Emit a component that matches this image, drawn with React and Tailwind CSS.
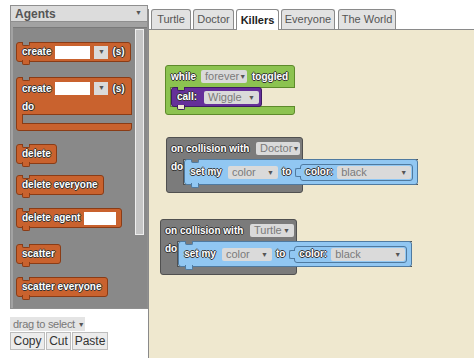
import React from "react";

// block label: white bold text with a dark outline
const label =
  "whitespace-nowrap text-[10px] font-bold leading-none text-white [text-shadow:1px_0_0_#333,-1px_0_0_#333,0_1px_0_#333,0_-1px_0_#333]";

function Field({ text, className }) {
  return (
    <span
      className={
        "flex h-[13px] shrink-0 items-center justify-between rounded-[2px] bg-[#dadada] pl-[4px] pr-[4px] text-[11px] leading-none text-[#7a7a7a] " +
        className
      }
    >
      <span>{text}</span>
      <span className="text-[7px] text-[#555]">▼</span>
    </span>
  );
}

function FlyBlock({ className, children }) {
  return (
    <div
      className={
        "relative flex h-[20px] w-fit items-center gap-[4px] rounded-[3px] border border-[#8a3c16] bg-[#c9622e] px-[5px] " +
        className
      }
    >
      <span className="absolute -top-px left-[5px] h-[4px] w-[8px] rounded-b-[2px] border-x border-b border-[#8a3c16] bg-[#898989]" />
      <span className="absolute -bottom-[4px] left-[5px] h-[5px] w-[8px] rounded-b-[2px] border-x border-b border-[#8a3c16] bg-[#c9622e]" />
      {children}
    </div>
  );
}

function Collision({ who, className }) {
  return (
    <div
      className={
        "absolute w-[137px] rounded-[3px] border border-[#505050] bg-[#7b7b7b] " +
        className
      }
    >
      <div className="flex h-[21px] items-center justify-between pl-[4px] pr-[2px]">
        <span className={label}>on collision with</span>
        <Field text={who} className="w-[44px]" />
      </div>
      <div className="flex h-[26px]">
        <div className="flex w-[23px] items-start pl-[4px] pt-[3px]">
          <span className={label}>do</span>
        </div>
        <div className="-mr-px flex-1 border-y border-l border-[#505050] bg-[#efe8cf]">
          <div className="relative -my-px flex h-[26px] w-[234px] items-center rounded-[3px] border border-[#4f7aa0] bg-[#91c7f2] pl-[5px] pr-[4px]">
            <span className="absolute -top-px left-[6px] h-[4px] w-[8px] rounded-b-[2px] border-x border-b border-[#4f7aa0] bg-[#7b7b7b]" />
            <span className="absolute -bottom-[4px] left-[6px] h-[5px] w-[8px] rounded-b-[2px] border-x border-b border-[#4f7aa0] bg-[#91c7f2]" />
            <span className={label}>set my</span>
            <Field text="color" className="ml-[6px] w-[50px]" />
            <span className={label + " ml-[4px]"}>to</span>
            <div className="relative ml-[9px] flex h-[17px] flex-1 items-center rounded-[3px] border border-[#4f7aa0] bg-[#91c7f2] pl-[4px] pr-px">
              <span className="absolute -left-[6px] top-[3px] h-[9px] w-[6px] rounded-l-[2px] border-y border-l border-[#4f7aa0] bg-[#91c7f2]" />
              <span className={label}>color:</span>
              <Field text="black" className="ml-[4px] flex-1" />
            </div>
          </div>
        </div>
      </div>
      <div className="h-[7px]" />
    </div>
  );
}

export default function App() {
  const tabs = [
    { name: "Turtle", w: "w-[40px]" },
    { name: "Doctor", w: "w-[41px]" },
    { name: "Killers", w: "w-[43px]", active: true },
    { name: "Everyone", w: "w-[54px]" },
    { name: "The World", w: "w-[58px] ml-px" },
  ];

  return (
    <div className="flex h-[358px] w-[474px] overflow-hidden bg-white font-['Liberation_Sans',Arial,sans-serif]">
      {/* left: agent flyout */}
      <div className="flex w-[148px] shrink-0 flex-col pl-[10px] pt-[5px]">
        <div className="flex h-[304px] flex-col border border-[#8f8f8f] bg-[#a2a2a2]">
          <div className="flex h-[16px] items-center justify-between border-b border-[#8f8f8f] bg-[#dcdcdc] pl-[4px] pr-[5px]">
            <span className="text-[12px] font-bold leading-none text-[#555]">Agents</span>
            <span className="text-[7px] text-[#555]">▼</span>
          </div>
          <div className="ml-[2px] mt-[5px] flex flex-1 border-t border-[#7a7a7a] bg-[#898989]">
            <div className="flex flex-1 flex-col pl-[3px] pt-[14px]">
              <FlyBlock>
                <span className={label}>create</span>
                <span className="h-[13px] w-[35px] bg-white" />
                <span className="flex h-[13px] w-[14px] items-center justify-center bg-[#dadada] text-[7px] text-[#555]">▼</span>
                <span className={label}>(s)</span>
              </FlyBlock>

              <div className="relative mt-[15px] w-[116px] rounded-[3px] border border-[#8a3c16] bg-[#c9622e]">
                <span className="absolute -top-px left-[5px] h-[4px] w-[8px] rounded-b-[2px] border-x border-b border-[#8a3c16] bg-[#898989]" />
                <div className="flex h-[36px] flex-col px-[5px] pt-[4px]">
                  <div className="flex h-[13px] items-center gap-[4px]">
                    <span className={label}>create</span>
                    <span className="h-[13px] w-[35px] bg-white" />
                    <span className="flex h-[13px] w-[14px] items-center justify-center bg-[#dadada] text-[7px] text-[#555]">▼</span>
                    <span className={label}>(s)</span>
                  </div>
                  <div className="mt-[7px] flex">
                    <span className={label}>do</span>
                  </div>
                </div>
                <div className="flex h-[10px]">
                  <div className="w-[5px]" />
                  <div className="-mr-px flex-1 border-y border-l border-[#8a3c16] bg-[#898989]" />
                </div>
                <div className="h-[6px]" />
              </div>

              <FlyBlock className="mt-[13px]">
                <span className={label}>delete</span>
              </FlyBlock>
              <FlyBlock className="mt-[11px]">
                <span className={label}>delete everyone</span>
              </FlyBlock>
              <FlyBlock className="mt-[13px]">
                <span className={label}>delete agent</span>
                <span className="h-[13px] w-[32px] bg-white" />
              </FlyBlock>
              <FlyBlock className="mt-[16px]">
                <span className={label}>scatter</span>
              </FlyBlock>
              <FlyBlock className="mt-[13px]">
                <span className={label}>scatter everyone</span>
              </FlyBlock>
            </div>
            <div className="mr-[3px] w-[9px]">
              <div className="mt-[1px] h-[206px] border border-[#eeeeee] bg-[#c6c6c6]" />
            </div>
          </div>
        </div>

        <div className="mt-[8px] flex h-[14px] w-[75px] items-center gap-[3px] whitespace-nowrap bg-[#e4e4e4] pl-[3px] text-[11px] leading-none tracking-[-0.3px] text-[#777]">
          drag to select <span className="text-[7px] text-[#555]">▼</span>
        </div>
        <div className="mt-px flex gap-px">
          {["Copy", "Cut", "Paste"].map((b, i) => (
            <button
              key={b}
              className={
                "flex h-[18px] items-center justify-center border border-[#bdbdbd] bg-[#ececec] text-[12px] leading-none text-[#333] " +
                ["w-[35px]", "w-[25px]", "w-[36px]"][i]
              }
            >
              {b}
            </button>
          ))}
        </div>
      </div>

      {/* right: tabs + workspace */}
      <div className="flex flex-1 flex-col pt-[9px]">
        <div className="flex flex-1 flex-col border-l border-[#8a8a8a]">
          <div className="flex h-[20px] items-end gap-[2px] pl-[2px]">
            {tabs.map((t) => (
              <div
                key={t.name}
                className={
                  "flex items-center justify-center rounded-t-[3px] border border-b-0 border-[#8a8a8a] text-[11px] leading-none " +
                  t.w +
                  (t.active
                    ? " relative z-10 -mb-px h-[21px] bg-white font-bold text-[#222]"
                    : " h-[20px] bg-[#e2e2e2] text-[#555]")
                }
              >
                {t.name}
              </div>
            ))}
          </div>
          <div className="relative flex-1 border-t border-[#8a8a8a] bg-[#efe8cf]">
            {/* while block */}
            <div className="absolute left-[16px] top-[35px] w-[130px] rounded-[3px] border border-[#5d8a2b] bg-[#8cc350]">
              <div className="flex h-[21px] items-center gap-[5px] pl-[5px]">
                <span className={label}>while</span>
                <Field text="forever" className="w-[46px]" />
                <span className={label}>toggled</span>
              </div>
              <div className="flex h-[20px]">
                <div className="w-[4px]" />
                <div className="-mr-px flex-1 border-y border-l border-[#5d8a2b] bg-[#efe8cf]">
                  <div className="relative -my-px flex h-[20px] w-[91px] items-center rounded-[3px] border border-[#3e1b63] bg-[#65309a] pl-[5px]">
                    <span className="absolute -top-px left-[5px] h-[4px] w-[8px] rounded-b-[2px] border-x border-b border-[#3e1b63] bg-[#8cc350]" />
                    <span className="absolute -bottom-[4px] left-[5px] h-[5px] w-[8px] rounded-b-[2px] border-x border-b border-[#3e1b63] bg-[#efe8cf]" />
                    <span className={label}>call:</span>
                    <Field text="Wiggle" className="ml-[7px] w-[55px]" />
                  </div>
                </div>
              </div>
              <div className="h-[7px]" />
            </div>

            <Collision who="Doctor" className="left-[17px] top-[107px]" />
            <Collision who="Turtle" className="left-[11px] top-[189px]" />
          </div>
        </div>
      </div>
    </div>
  );
}
